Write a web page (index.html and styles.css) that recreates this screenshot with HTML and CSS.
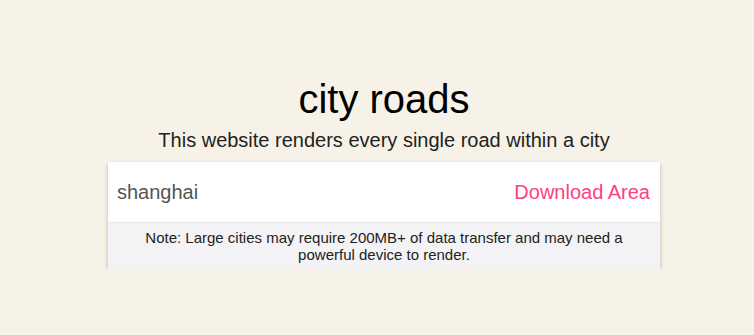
FILE: index.html
```html
<!DOCTYPE html>
<html>
<head>
<meta charset="utf-8">
<link rel="stylesheet" href="styles.css">
</head>
<body>
<div class="page">
  <h1 class="title">city roads</h1>
  <p class="subtitle">This website renders every single road within a city</p>
  <div class="card">
    <div class="search-row">
      <span class="query">shanghai</span>
      <a class="download">Download Area</a>
    </div>
    <div class="note">Note: Large cities may require 200MB+ of data transfer and may need a powerful device to render.</div>
  </div>
</div>
</body>
</html>
```

FILE: styles.css
```css
html, body {
  margin: 0;
  padding: 0;
  background: #f7f2e7;
  font-family: "Liberation Sans", Arial, sans-serif;
}
.page {
  padding: 76px 0 0 14px;
  display: flex;
  flex-direction: column;
  align-items: center;
}
.title {
  margin: 0;
  font-size: 40px;
  font-weight: normal;
  line-height: 46px;
  color: #000;
}
.subtitle {
  margin: 4px 0 0;
  font-size: 20px;
  line-height: 28px;
  color: #222;
}
.card {
  margin-top: 8px;
  width: 552px;
  background: #fff;
  box-shadow: 0 2px 4px rgba(0,0,0,0.25);
}
.search-row {
  height: 61px;
  display: flex;
  align-items: center;
  justify-content: space-between;
  padding: 1px 10px 0 9px;
  border-bottom: 1px solid #e8e8e8;
  box-sizing: border-box;
}
.query {
  font-size: 20px;
  color: #555;
}
.download {
  font-size: 20px;
  color: #ff4081;
}
.note {
  background: #f3f3f5;
  padding: 6px 30px 6px;
  font-size: 15px;
  line-height: 17px;
  text-align: center;
  color: #222;
}
```
